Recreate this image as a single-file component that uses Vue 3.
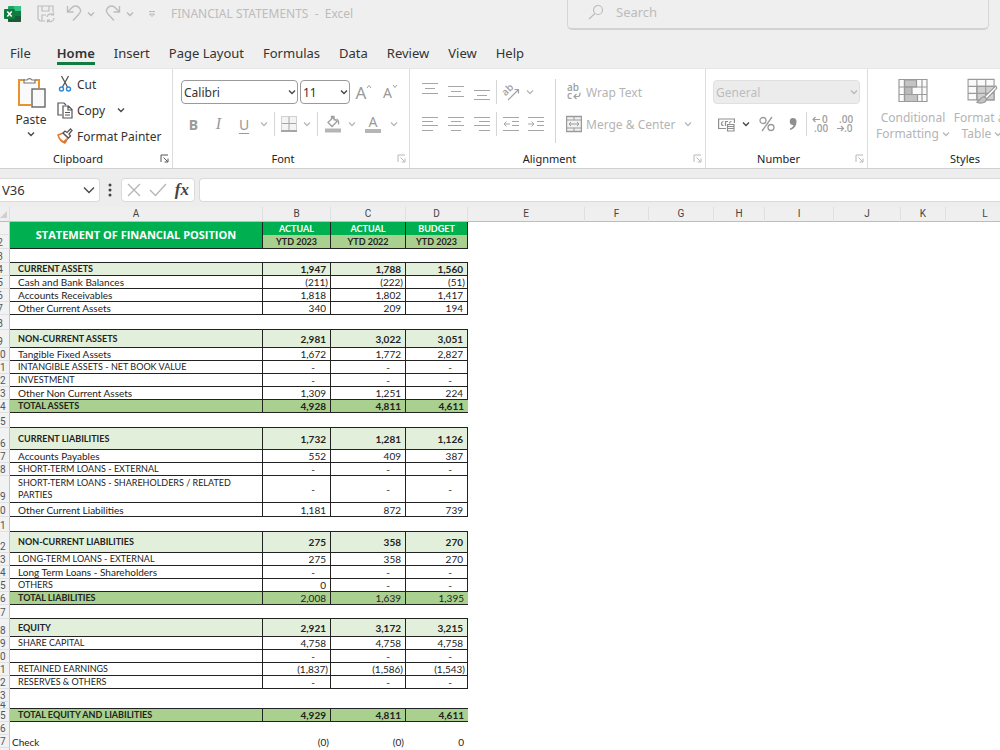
<script setup>
import { ref } from 'vue'

const tabs = ['File', 'Home', 'Insert', 'Page Layout', 'Formulas', 'Data', 'Review', 'View', 'Help']
const activeTab = ref('Home')
const fontName = ref('Calibri')
const fontSize = ref('11')
const cellRef = ref('V36')
const formula = ref('')
const search = ref('')

const columns = ['A', 'B', 'C', 'D', 'E', 'F', 'G', 'H', 'I', 'J', 'K', 'L']

// h = row height, type = row style
const rows = [
  { n: 3, h: 14, type: 'gap' },
  { n: 4, h: 13, type: 'section', label: 'CURRENT ASSETS', v: ['1,947', '1,788', '1,560'] },
  { n: 5, h: 13, type: 'line', label: 'Cash and Bank Balances', v: ['(211)', '(222)', '(51)'] },
  { n: 6, h: 13, type: 'line', label: 'Accounts Receivables', v: ['1,818', '1,802', '1,417'] },
  { n: 7, h: 13, type: 'line', label: 'Other Current Assets', v: ['340', '209', '194'] },
  { n: 8, h: 15, type: 'gap' },
  { n: 9, h: 18, type: 'section', label: 'NON-CURRENT ASSETS', v: ['2,981', '3,022', '3,051'] },
  { n: 10, h: 13, type: 'line', label: 'Tangible Fixed Assets', v: ['1,672', '1,772', '2,827'] },
  { n: 11, h: 13, type: 'line', label: 'INTANGIBLE ASSETS - NET BOOK VALUE', v: ['-', '-', '-'] },
  { n: 12, h: 13, type: 'line', label: 'INVESTMENT', v: ['-', '-', '-'] },
  { n: 13, h: 13, type: 'line', label: 'Other Non Current Assets', v: ['1,309', '1,251', '224'] },
  { n: 14, h: 13, type: 'total', label: 'TOTAL ASSETS', v: ['4,928', '4,811', '4,611'] },
  { n: 15, h: 15, type: 'gap' },
  { n: 16, h: 22, type: 'section', label: 'CURRENT LIABILITIES', v: ['1,732', '1,281', '1,126'] },
  { n: 17, h: 13, type: 'line', label: 'Accounts Payables', v: ['552', '409', '387'] },
  { n: 18, h: 13, type: 'line', label: 'SHORT-TERM LOANS - EXTERNAL', v: ['-', '-', '-'] },
  { n: 19, h: 27, type: 'line', label: 'SHORT-TERM LOANS - SHAREHOLDERS / RELATED PARTIES', v: ['-', '-', '-'] },
  { n: 20, h: 14, type: 'line', label: 'Other Current Liabilities', v: ['1,181', '872', '739'] },
  { n: 21, h: 15, type: 'gap' },
  { n: 22, h: 21, type: 'section', label: 'NON-CURRENT LIABILITIES', v: ['275', '358', '270'] },
  { n: 23, h: 13, type: 'line', label: 'LONG-TERM LOANS - EXTERNAL', v: ['275', '358', '270'] },
  { n: 24, h: 13, type: 'line', label: 'Long Term Loans - Shareholders', v: ['-', '-', '-'] },
  { n: 25, h: 13, type: 'line', label: 'OTHERS', v: ['0', '-', '-'] },
  { n: 26, h: 13, type: 'total light', label: 'TOTAL LIABILITIES', v: ['2,008', '1,639', '1,395'] },
  { n: 27, h: 14, type: 'gap' },
  { n: 28, h: 18, type: 'section', label: 'EQUITY', v: ['2,921', '3,172', '3,215'] },
  { n: 29, h: 13, type: 'line', label: 'SHARE CAPITAL', v: ['4,758', '4,758', '4,758'] },
  { n: 30, h: 13, type: 'line', label: '', v: ['-', '-', '-'] },
  { n: 31, h: 13, type: 'line', label: 'RETAINED EARNINGS', v: ['(1,837)', '(1,586)', '(1,543)'] },
  { n: 32, h: 13, type: 'line', label: 'RESERVES & OTHERS', v: ['-', '-', '-'] },
  { n: 33, h: 13, type: 'blank' },
  { n: 34, h: 7, type: 'gap' },
  { n: 35, h: 13, type: 'total', label: 'TOTAL EQUITY AND LIABILITIES', v: ['4,929', '4,811', '4,611'] },
  { n: 36, h: 13, type: 'blank' },
  { n: 37, h: 13, type: 'check', label: 'Check', v: ['(0)', '(0)', '0'] },
  { n: 38, h: 13, type: 'blank' }
]

function numClass(v) {
  if (v === '-') return 'dash'
  return v.startsWith('(') ? 'neg' : 'pos'
}

// upper-case labels are set one size smaller
function isCaps(label) {
  return label === label.toUpperCase()
}
</script>

<template>
  <div class="excel">
    <header class="titlebar">
      <svg class="logo" width="18" height="18" viewBox="0 0 18 18">
        <rect x="4" y="1" width="13" height="16" rx="1" fill="#21a366" />
        <path d="M10 1h6a1 1 0 0 1 1 1v4h-7z" fill="#33c481" />
        <path d="M4 9h13v7a1 1 0 0 1-1 1H5a1 1 0 0 1-1-1z" fill="#185c37" />
        <path d="M10 6h7v5h-7z" fill="#107c41" />
        <rect x="0" y="4" width="11" height="10" rx="1" fill="#107c41" />
        <path d="M3.300 6.500l4.400 5M7.700 6.500l-4.400 5" stroke="#fff" stroke-width="1.500" />
      </svg>
      <button class="quick save" aria-label="Save">
        <svg width="18" height="18" viewBox="0 0 18 18" fill="none" stroke="#bdbdbd" stroke-width="1.200">
          <path d="M8 16H3L1 14V1h15v6M5 1v5h7V1M5 16v-6h4" />
          <path d="M10 12a3.500 3.500 0 0 1 6-2M16.500 7.500V10H14M17 13a3.500 3.500 0 0 1-6 2.500M10.500 17.500V15H13" />
        </svg>
      </button>
      <button class="quick undo" aria-label="Undo">
        <svg width="16" height="18" viewBox="0 0 16 18" fill="none" stroke="#bdbdbd" stroke-width="1.400">
          <path d="M1.500 1v6h6M1.500 7l4-4a5 5 0 0 1 8 0c1.500 2 1 4.500-.5 6l-6 6.500" />
        </svg>
        <svg class="chev" viewBox="0 0 8 8"><path d="M1 2.500l3 3 3-3" /></svg>
      </button>
      <button class="quick redo" aria-label="Redo">
        <svg width="16" height="18" viewBox="0 0 16 18" fill="none" stroke="#bdbdbd" stroke-width="1.400">
          <path d="M14.500 1v6h-6M14.500 7l-4-4a5 5 0 0 0-8 0c-1.500 2-1 4.500.5 6l6 6.500" />
        </svg>
        <svg class="chev" viewBox="0 0 8 8"><path d="M1 2.500l3 3 3-3" /></svg>
      </button>
      <button class="quick" aria-label="Customize toolbar">
        <svg width="8" height="8" viewBox="0 0 8 8" fill="none" stroke="#b8b8b8"><path d="M1 1.500h6M1.500 4L4 6.500 6.500 4z" /></svg>
      </button>
      <span class="doc">FINANCIAL STATEMENTS &nbsp;-&nbsp; Excel</span>
      <label class="search">
        <svg width="16" height="16" viewBox="0 0 16 16" fill="none" stroke="#bdbdbd" stroke-width="1.200">
          <circle cx="10" cy="6" r="4.500" /><path d="M7 9.500L1 15" />
        </svg>
        <input v-model="search" type="text" placeholder="Search" aria-label="Search" />
      </label>
    </header>

    <nav class="tabs">
      <button v-for="t in tabs" :key="t" :class="{ active: t === activeTab }" @click="activeTab = t">{{ t }}</button>
    </nav>

    <section class="ribbon">
      <div class="group clipboard">
        <div class="body">
          <button class="paste">
            <svg width="30" height="34" viewBox="0 0 30 34" fill="none">
              <path d="M9 4H3v25h12M19 4h4v8" stroke="#e8932e" stroke-width="2" />
              <path d="M4 6v21h11V13h7V6z" fill="#fafafa" />
              <path d="M8 7V4h3a3 3 0 0 1 5 0h3v3z" fill="#fff" stroke="#777" stroke-width="1.200" />
              <rect x="16" y="13" width="13" height="18" fill="#fafafa" stroke="#666" stroke-width="1.400" />
            </svg>
            <span>Paste</span>
            <svg class="chev dark" viewBox="0 0 8 8"><path d="M1 2.500l3 3 3-3" /></svg>
          </button>
          <div class="clip-list">
            <button>
              <svg width="16" height="18" viewBox="0 0 16 18" fill="none">
                <path d="M4.500 1l6 11M11.500 1l-6 11" stroke="#555" stroke-width="1.300" />
                <circle cx="4.500" cy="14" r="2" stroke="#2b88d8" stroke-width="1.400" />
                <circle cx="11.500" cy="14" r="2" stroke="#2b88d8" stroke-width="1.400" />
              </svg>
              Cut
            </button>
            <button>
              <svg width="16" height="18" viewBox="0 0 16 18" fill="none" stroke="#555" stroke-width="1.200">
                <path d="M5 14H1V2h6l2 2" />
                <path d="M6 5h5.500L15 8.500V17H6zM11 5v4h4M8 11.500h5M8 14h5" />
              </svg>
              Copy
              <svg class="chev dark copy-chev" viewBox="0 0 8 8"><path d="M1 2.500l3 3 3-3" /></svg>
            </button>
            <button>
              <svg width="16" height="18" viewBox="0 0 16 18" fill="none">
                <path d="M1 8l5-2 5 5-3 5c-3-1-6-4-7-8z" fill="#fff" stroke="#e0762c" stroke-width="1.400" />
                <path d="M3 11l3.500 3L10 11l-1 4-1.500 1.500z" fill="#e0762c" />
                <path d="M6 6l2-2 2 1.500L13.500 2l1.500 1.500L12 7l1.500 2-2 2z" fill="#fff" stroke="#555" stroke-width="1.300" />
              </svg>
              Format Painter
            </button>
          </div>
        </div>
        <footer>
          <span>Clipboard</span>
          <button class="launch dark" aria-label="Clipboard options"><svg viewBox="0 0 9 9"><path d="M1 8V1h7M3.500 3.500l4 4M8 4.500V8H4.500" /></svg></button>
        </footer>
      </div>

      <div class="group font">
        <div class="body stack">
          <div class="line">
            <label class="select name">
              <select v-model="fontName" aria-label="Font"><option>Calibri</option><option>Arial</option></select>
              <svg class="chev dark" viewBox="0 0 8 8"><path d="M1 2.500l3 3 3-3" /></svg>
            </label>
            <label class="select size">
              <select v-model="fontSize" aria-label="Font size"><option>11</option><option>12</option></select>
              <svg class="chev dark" viewBox="0 0 8 8"><path d="M1 2.500l3 3 3-3" /></svg>
            </label>
            <button class="tool w28 grow-a">A<svg width="6" height="5" viewBox="0 0 6 5"><path d="M1 4l2-2.500L5 4" /></svg></button>
            <button class="tool w25 shrink-a">A<svg width="6" height="5" viewBox="0 0 6 5"><path d="M1 1l2 2.500L5 1" /></svg></button>
          </div>
          <div class="line">
            <button class="tool w25 bold">B</button>
            <button class="tool w25 italic">I</button>
            <button class="tool w26 under">U</button>
            <button class="tool w14" aria-label="Underline options"><svg class="chev" viewBox="0 0 8 8"><path d="M1 2.500l3 3 3-3" /></svg></button>
            <i class="sep"></i>
            <button class="tool w22" aria-label="Borders">
              <svg width="16" height="16" viewBox="0 0 16 16" fill="none" stroke="#a6a6a6">
                <path d="M.5.500h15v14H.5z" fill="#f4f4f4" stroke-dasharray="1 1" /><path d="M8 1v14M1 7.500h14" /><path d="M0 15h16" stroke-width="2" />
              </svg>
            </button>
            <button class="tool w14" aria-label="Border options"><svg class="chev" viewBox="0 0 8 8"><path d="M1 2.500l3 3 3-3" /></svg></button>
            <i class="sep"></i>
            <button class="tool w24" aria-label="Fill color">
              <svg width="16" height="18" viewBox="0 0 16 18" fill="none" stroke="#a0a0a0" stroke-width="1.300">
                <path d="M3 7.500L8 2.500l4 4-5 5zM6.500 4.500V1.500h2.500v4M11.500 4c2 1 2.500 2.500 2 5.500" /><path d="M0 15.500h16" stroke="#b5b5b5" stroke-width="4" />
              </svg>
            </button>
            <button class="tool w14" aria-label="Fill options"><svg class="chev" viewBox="0 0 8 8"><path d="M1 2.500l3 3 3-3" /></svg></button>
            <button class="tool w28 color-a">A</button>
            <button class="tool w14" aria-label="Font color options"><svg class="chev" viewBox="0 0 8 8"><path d="M1 2.500l3 3 3-3" /></svg></button>
          </div>
        </div>
        <footer>
          <span>Font</span>
          <button class="launch" aria-label="Font options"><svg viewBox="0 0 9 9"><path d="M1 8V1h7M3.500 3.500l4 4M8 4.500V8H4.500" /></svg></button>
        </footer>
      </div>

      <div class="group align">
        <div class="body">
          <div class="stack">
            <div class="line">
              <button class="tool w26" aria-label="Top align"><svg class="bars" viewBox="0 0 16 20"><path d="M0 1.500h16M3 6.500h10M0 11.500h16" /></svg></button>
              <button class="tool w26" aria-label="Middle align"><svg class="bars" viewBox="0 0 16 20"><path d="M0 4.500h16M3 9.500h10M0 14.500h16" /></svg></button>
              <button class="tool w26" aria-label="Bottom align"><svg class="bars" viewBox="0 0 16 20"><path d="M0 8.500h16M3 13.500h10M0 17.500h16" /></svg></button>
              <i class="sep"></i>
              <button class="tool w24" aria-label="Orientation">
                <svg width="18" height="18" viewBox="0 0 18 18" fill="none" stroke="#a0a0a0" stroke-width="1.200">
                  <text class="glyph" x="-7" y="12" transform="rotate(-45)">ab</text>
                  <path d="M6 17l10-10M12.500 6.500H16.500V10.500" />
                </svg>
              </button>
              <button class="tool w14" aria-label="Orientation options"><svg class="chev" viewBox="0 0 8 8"><path d="M1 2.500l3 3 3-3" /></svg></button>
            </div>
            <div class="line">
              <button class="tool w26" aria-label="Align left"><svg class="bars" viewBox="0 0 16 20"><path d="M0 3.500h16M0 7.500h11M0 11.500h16M0 16.500h11" /></svg></button>
              <button class="tool w26" aria-label="Center"><svg class="bars" viewBox="0 0 16 20"><path d="M0 3.500h16M3 7.500h10M0 11.500h16M3 16.500h10" /></svg></button>
              <button class="tool w26" aria-label="Align right"><svg class="bars" viewBox="0 0 16 20"><path d="M0 3.500h16M5 7.500h11M0 11.500h16M5 16.500h11" /></svg></button>
              <i class="sep"></i>
              <button class="tool w24" aria-label="Decrease indent"><svg class="bars" viewBox="0 0 16 20"><path d="M0 3.500h16M9 7.500h7M9 11.500h7M0 16.500h16M1 10h6M3.500 7.500L1 10l2.500 2.500" /></svg></button>
              <button class="tool w26" aria-label="Increase indent"><svg class="bars" viewBox="0 0 16 20"><path d="M0 3.500h16M9 7.500h7M9 11.500h7M0 16.500h16M0 10h6M3.500 7.500L6 10l-2.500 2.500" /></svg></button>
            </div>
          </div>
          <i class="tall"></i>
          <div class="stack wide">
            <button class="text-tool">
              <svg width="16" height="18" viewBox="0 0 16 18" fill="none" stroke="#a0a0a0" stroke-width="1.200">
                <text class="glyph" x="1" y="8">ab</text>
                <text class="glyph" x="1" y="16">c</text>
                <path d="M14 9.500v1.500c0 2-1 2.500-2.500 2.500H8M10.500 11L8 13.500l2.500 2.500" />
              </svg>
              Wrap Text
            </button>
            <button class="text-tool">
              <svg width="16" height="18" viewBox="0 0 16 18" fill="none" stroke="#9a9a9a">
                <path d="M.5 1.500h15v15H.5z" fill="#f2f2f2" stroke-width="1.400" /><path d="M8 1.500V5M8 13v3.500M.5 5h15M.5 13h15M3 9h10M5 7L3 9l2 2M11 7l2 2-2 2" />
              </svg>
              Merge &amp; Center
              <svg class="chev end" viewBox="0 0 8 8"><path d="M1 2.500l3 3 3-3" /></svg>
            </button>
          </div>
        </div>
        <footer>
          <span>Alignment</span>
          <button class="launch" aria-label="Alignment options"><svg viewBox="0 0 9 9"><path d="M1 8V1h7M3.500 3.500l4 4M8 4.500V8H4.500" /></svg></button>
        </footer>
      </div>

      <div class="group number">
        <div class="body stack">
          <label class="select format">
            <select disabled aria-label="Number format"><option>General</option></select>
            <svg class="chev" viewBox="0 0 8 8"><path d="M1 2.500l3 3 3-3" /></svg>
          </label>
          <div class="line">
            <button class="tool w26" aria-label="Accounting format">
              <svg width="17" height="16" viewBox="0 0 17 16" fill="none" stroke="#8f8f8f" stroke-width="1.200">
                <path d="M8 12.500H.6V3h15.800v4" /><path d="M5.500 5.500a2 2 0 1 0 0 4M7.500 10V5.500h2.500M13.500 5.500a2 2 0 0 0-2 2" />
                <path d="M9.500 8.500h6.500V15H9.500zM9.500 10.500h6.500M9.500 12.500h6.500" fill="#fff" />
              </svg>
            </button>
            <button class="tool w14" aria-label="Accounting options"><svg class="chev dark" viewBox="0 0 8 8"><path d="M1 2.500l3 3 3-3" /></svg></button>
            <button class="tool w28 percent" aria-label="Percent">
              <svg width="16" height="16" viewBox="0 0 16 16" fill="none" stroke="#9a9a9a" stroke-width="1.300"><circle cx="4" cy="4.500" r="3" /><circle cx="12" cy="11.500" r="3" /><path d="M13 1L3 15" /></svg>
            </button>
            <button class="tool w24" aria-label="Comma">
              <svg width="10" height="14" viewBox="0 0 10 14"><path d="M5 1a3.500 3.500 0 0 1 3.500 3.500C8.500 9 6 12 2 13v-1.500C4.500 10.500 5.500 9 5.500 8A3.500 3.500 0 1 1 5 1z" fill="#8f8f8f" /></svg>
            </button>
            <i class="sep"></i>
            <button class="tool w22" aria-label="Increase decimal">
              <svg width="16" height="18" viewBox="0 0 16 18" fill="none" stroke="#a0a0a0" stroke-width="1.200">
                <path d="M1 4.500h7M3.500 2L1 4.500 3.500 7" />
                <text class="glyph" x="10" y="8">0</text>
                <text class="glyph" x="2" y="17">.00</text>
              </svg>
            </button>
            <button class="tool w28" aria-label="Decrease decimal">
              <svg width="16" height="18" viewBox="0 0 16 18" fill="none" stroke="#a0a0a0" stroke-width="1.200">
                <path d="M0 13.500h6.500M4 11l2.500 2.500L4 16" />
                <text class="glyph" x="2" y="8">.00</text>
                <text class="glyph" x="7" y="17">.0</text>
              </svg>
            </button>
          </div>
        </div>
        <footer>
          <span>Number</span>
          <button class="launch" aria-label="Number options"><svg viewBox="0 0 9 9"><path d="M1 8V1h7M3.500 3.500l4 4M8 4.500V8H4.500" /></svg></button>
        </footer>
      </div>

      <div class="group styles">
        <div class="body">
          <button class="big">
            <svg width="30" height="26" viewBox="0 0 30 26" fill="none" stroke="#9a9a9a" stroke-width="1.200">
              <path d="M1 1.500h28v22H1z" fill="#fafafa" /><path d="M6.500 2h12v7h-12zM6.500 16.500h13v7h-13z" fill="#c4c4c4" /><path d="M6.500 9H14v7.500H6.500z" fill="#bbb" />
              <path d="M1 9h28M1 16.500h28M6.500 1.500v22M24 1.500v22" />
            </svg>
            <span>Conditional<br />Formatting <svg class="chev" viewBox="0 0 8 8"><path d="M1 2.500l3 3 3-3" /></svg></span>
          </button>
          <button class="big second">
            <svg width="32" height="28" viewBox="0 0 32 28" fill="none" stroke="#9a9a9a" stroke-width="1.200">
              <path d="M1 1.500h28v22H1z" fill="#fafafa" /><path d="M10.500 9H29v14.500H10.500z" fill="#cfcfcf" /><path d="M1 9h28M1 16.500h28M10.500 1.500v22M20 1.500v22" />
              <path d="M31 8.500L19 20l2 2.500L32 11z" fill="#fff" /><path d="M18.500 20c-4 0-4 4-8 6 4 2 10 1 10.500-3.500z" fill="#c4c4c4" />
            </svg>
            <span>Format as<br />Table <svg class="chev" viewBox="0 0 8 8"><path d="M1 2.500l3 3 3-3" /></svg></span>
          </button>
        </div>
        <footer><span>Styles</span></footer>
      </div>
    </section>

    <section class="formula-bar">
      <label class="namebox">
        <input v-model="cellRef" type="text" aria-label="Name box" />
        <svg width="12" height="8" viewBox="0 0 12 8" fill="none" stroke="#444" stroke-width="1.300"><path d="M1 1.500l5 5 5-5" /></svg>
      </label>
      <svg class="dots" width="4" height="14" viewBox="0 0 4 14" fill="#444"><circle cx="2" cy="2" r="1.500" /><circle cx="2" cy="7" r="1.500" /><circle cx="2" cy="12" r="1.500" /></svg>
      <div class="fx">
        <button aria-label="Cancel"><svg width="14" height="14" viewBox="0 0 14 14"><path d="M1 1l12 12M13 1L1 13" /></svg></button>
        <button aria-label="Enter"><svg width="18" height="14" viewBox="0 0 18 14"><path d="M1 7l5.500 5.500L17 1" /></svg></button>
        <button class="fn">fx</button>
      </div>
      <input v-model="formula" class="formula" type="text" aria-label="Formula" />
    </section>

    <main class="sheet">
      <table>
        <colgroup>
          <col class="c-num" /><col v-for="c in columns" :key="c" :class="'c-' + c" />
        </colgroup>
        <thead>
          <tr>
            <th class="corner"><svg width="7" height="7" viewBox="0 0 7 7"><path d="M7 0v7H0z" fill="#d0d0d0" /></svg></th>
            <th v-for="c in columns" :key="c" :class="'h-' + c">{{ c }}</th>
          </tr>
        </thead>
        <tbody>
          <tr class="head top">
            <th class="num"></th>
            <td class="title" rowspan="2">STATEMENT OF FINANCIAL POSITION</td>
            <td>ACTUAL</td>
            <td>ACTUAL</td>
            <td>BUDGET</td>
          </tr>
          <tr class="head period">
            <th class="num"><div>2</div></th>
            <td>YTD 2023</td>
            <td>YTD 2022</td>
            <td>YTD 2023</td>
          </tr>
          <tr v-for="r in rows" :key="r.n" :class="r.type" :style="{ height: r.h + 'px' }">
            <th class="num" :class="{ tiny: r.h < 10 }"><div>{{ r.n }}</div></th>
            <template v-if="r.v">
              <td class="label" :class="{ caps: isCaps(r.label) }">{{ r.label }}</td>
              <td v-for="(v, i) in r.v" :key="i" :class="numClass(v)">{{ v }}</td>
            </template>
            <td v-else class="empty" colspan="4"></td>
          </tr>
        </tbody>
      </table>
    </main>
  </div>
</template>

<style>
body {
  margin: 0;
  background: #fff;
}
</style>

<style scoped>
.excel {
  height: 100vh;
  display: flex;
  flex-direction: column;
  overflow: hidden;
  background: #fff;
  color: #333;
  font-family: "Noto Sans", "Open Sans", sans-serif;
  font-size: 12px;
}
button,
input,
select {
  font: inherit;
  color: inherit;
  border: 0;
  padding: 0;
  background: none;
  box-sizing: border-box;
}
svg {
  flex: none;
}
.chev {
  width: 8px;
  height: 8px;
  fill: none;
  stroke: #b8b8b8;
  stroke-width: 1.3;
}
.chev.dark {
  stroke: #444;
}
.glyph {
  fill: #a0a0a0;
  stroke: none;
  font-family: "Open Sans", sans-serif;
  font-size: 10px;
  font-weight: 600;
}

/* title bar */
.titlebar {
  display: flex;
  align-items: center;
  flex: none;
  height: 36px;
  padding: 0 11px 9px 4px;
  box-sizing: border-box;
  background: #efefef;
  color: #bcbcbc;
}
.logo {
  margin-right: 15px;
}
.quick {
  display: flex;
  align-items: center;
  gap: 5px;
}
.save {
  margin-right: 11px;
}
.undo {
  margin-right: 10px;
}
.redo {
  margin-right: 14px;
}
.doc {
  margin-left: 15px;
  white-space: nowrap;
}
.search {
  display: flex;
  align-items: center;
  gap: 12px;
  width: 422px;
  height: 30px;
  margin: 0 0 -3px auto;
  padding: 0 20px 4px;
  box-sizing: border-box;
  border: 1px solid #d6d6d6;
  border-top: 0;
  border-bottom: 2px solid #d2d2d2;
  border-radius: 0 0 5px 5px;
}
.search input {
  flex: 1;
  font-size: 13px;
  outline: 0;
}
.search input::placeholder {
  color: #bcbcbc;
  opacity: 1;
}

/* tabs */
.tabs {
  display: flex;
  flex: none;
  gap: 19px;
  height: 33px;
  padding: 8px 10px 3px;
  box-sizing: border-box;
  background: #efefef;
  border-bottom: 1px solid #e6e6e6;
}
.tabs button {
  font-size: 13px;
  line-height: 18px;
  border-bottom: 3px solid transparent;
}
.tabs button:first-child {
  margin-right: 7px;
}
.tabs .active {
  font-weight: 600;
  border-color: #107c41;
}

/* ribbon */
.ribbon {
  display: flex;
  flex: none;
  height: 100px;
  box-sizing: border-box;
  overflow: hidden;
  background: #fff;
  border-bottom: 1px solid #d0d0d0;
}
.group {
  flex: none;
  display: flex;
  flex-direction: column;
  box-sizing: border-box;
  border-right: 1px solid #dcdcdc;
}
.clipboard { width: 173px; }
.font { width: 237px; }
.align { width: 296px; }
.number { width: 162px; }
.styles { width: 202px; }
.body {
  display: flex;
  height: 80px;
  box-sizing: border-box;
}
.stack {
  display: flex;
  flex-direction: column;
  gap: 8px;
  padding-top: 11px;
}
.line {
  display: flex;
  align-items: center;
  height: 24px;
}
.group footer {
  display: flex;
  align-items: center;
  height: 19px;
  padding-right: 3px;
  font-size: 11px;
  color: #222;
}
.group footer span {
  flex: 1;
  padding-right: 4px;
  text-align: center;
}
.launch {
  width: 9px;
  height: 9px;
  display: flex;
}
.launch svg {
  fill: none;
  stroke: #b8b8b8;
}
.launch.dark svg {
  stroke: #555;
}
.paste {
  display: flex;
  flex-direction: column;
  align-items: center;
  width: 32px;
  margin-left: 15px;
  padding-top: 7px;
}
.paste span {
  line-height: 20px;
}
.clip-list {
  margin: 2px 0 0 10px;
}
.clip-list button {
  display: flex;
  align-items: center;
  gap: 4px;
  height: 26px;
  white-space: nowrap;
}
.copy-chev {
  margin-left: 8px;
}
.font .stack {
  padding-left: 8px;
}
.select {
  display: flex;
  position: relative;
  height: 24px;
}
.select select {
  width: 100%;
  height: 24px;
  appearance: none;
  padding: 0 2px;
  border: 1px solid #9a9a9a;
  border-radius: 4px;
  background: #fff;
}
.select .chev {
  position: absolute;
  right: 2px;
  top: 8px;
  pointer-events: none;
}
.name { width: 117px; margin-right: 2px; }
.size { width: 50px; }
.format { width: 147px; }
.format select {
  border-color: #e0e0e0;
  background: #ececec;
  color: #bcbcbc;
  opacity: 1;
}
.tool {
  display: flex;
  justify-content: center;
  align-items: center;
  height: 24px;
  color: #9a9a9a;
  font-size: 14px;
}
.w14 { width: 14px; }
.w22 { width: 22px; }
.w24 { width: 24px; }
.w25 { width: 25px; }
.w26 { width: 26px; }
.w28 { width: 28px; }
.sep {
  width: 1px;
  height: 24px;
  margin: 0 3px;
  background: #d5d5d5;
}
.align .sep,
.number .sep {
  margin: 0 2px 0 1px;
}
.grow-a {
  font-size: 17px;
}
.grow-a svg,
.shrink-a svg {
  align-self: flex-start;
  margin-top: 4px;
  fill: none;
  stroke: #a0a0a0;
}
.bold {
  font-weight: 700;
}
.italic {
  font-family: "Liberation Serif", serif;
  font-style: italic;
  font-size: 16px;
}
.under {
  text-decoration: underline;
  text-underline-offset: 3px;
}
.color-a {
  flex-direction: column;
  line-height: 14px;
}
.color-a::before {
  content: "";
  order: 2;
  width: 16px;
  height: 4px;
  background: #b5b5b5;
}
.bars {
  width: 16px;
  height: 20px;
  fill: none;
  stroke: #a6a6a6;
}
.align .body {
  padding-left: 7px;
}
.tall {
  width: 1px;
  height: 64px;
  margin: 10px 10px 0 0;
  background: #d5d5d5;
}
.align .stack:first-child {
  width: 138px;
}
.wide {
  flex: 1;
}
.text-tool {
  display: flex;
  align-items: center;
  gap: 4px;
  height: 24px;
  color: #b4b4b4;
  white-space: nowrap;
}
.end {
  margin: 0 13px 0 auto;
}
.number .stack {
  padding-left: 7px;
}
.styles .body {
  padding-left: 6px;
}
.big {
  flex: none;
  display: flex;
  flex-direction: column;
  align-items: center;
  gap: 6px;
  width: 78px;
  padding-top: 9px;
  color: #b4b4b4;
  line-height: 16px;
  white-space: nowrap;
}
.second {
  width: 60px;
}
.big > svg {
  height: 26px;
}

/* formula bar */
.formula-bar {
  display: flex;
  align-items: center;
  flex: none;
  height: 38px;
  padding-top: 3px;
  box-sizing: border-box;
  background: #ededed;
}
.namebox,
.fx,
.formula {
  height: 24px;
  box-sizing: border-box;
  border: 1px solid #dadada;
  border-radius: 4px;
  background: #fff;
}
.namebox {
  display: flex;
  align-items: center;
  width: 100px;
  padding-right: 4px;
  border-left: 0;
  border-radius: 0 4px 4px 0;
}
.namebox input {
  flex: 1;
  min-width: 0;
  padding-left: 2px;
  font-size: 13px;
}
.dots {
  margin: 0 9px 0 8px;
}
.fx {
  display: flex;
  align-items: center;
  justify-content: space-between;
  width: 74px;
  margin-right: 4px;
  padding: 0 5px;
}
.fx button {
  display: flex;
}
.fx svg {
  fill: none;
  stroke: #b5b5b5;
  stroke-width: 1.3;
}
.fx .fn {
  font: italic 700 17px/20px "Liberation Serif", serif;
  color: #444;
}
.formula {
  flex: 1;
  padding: 0 6px;
  border-right: 0;
  border-radius: 4px 0 0 4px;
}

/* sheet */
.sheet {
  flex: 1;
  min-height: 0;
  overflow: hidden;
}
table {
  width: 100%;
  table-layout: fixed;
  border-collapse: separate;
  border-spacing: 0;
  font-family: Lato, "Open Sans", sans-serif;
  font-size: 10px;
  line-height: 12px;
  color: #222;
}
.c-num { width: 10px; }
.c-A { width: 253px; }
.c-B { width: 68px; }
.c-C { width: 75px; }
.c-D { width: 62px; }
.c-E { width: 117px; }
.c-F { width: 64px; }
.c-G { width: 65px; }
.c-H { width: 51px; }
.c-I { width: 69px; }
.c-J { width: 67px; }
.c-K { width: 45px; }
th,
td {
  padding: 0;
  box-sizing: border-box;
}
thead th {
  height: 15px;
  background: #efefef;
  border-right: 1px solid #e0e0e0;
  border-bottom: 1px solid #bdbdbd;
  font-family: Roboto, sans-serif;
  font-weight: 400;
  color: #444;
}
thead .h-L {
  padding-left: 24px;
  border-right: 0;
}
.corner svg {
  display: block;
}
.num {
  background: #f2f2f2;
  border-right: 1px solid #c4c4c4;
  border-bottom: 1px solid #e0e0e0;
  font-family: Roboto, sans-serif;
  font-weight: 400;
  color: #555;
  vertical-align: bottom;
}
.num div {
  display: flex;
  justify-content: center;
  width: 0;
  height: 11px;
  line-height: 11px;
}
.num.tiny div {
  height: 6px;
  line-height: 6px;
  overflow-y: clip;
}
.head {
  height: 13px;
  font-size: 9px;
  font-weight: 700;
  text-align: center;
}
.head.period {
  height: 14px;
}
.head .num {
  font-size: 10px;
}
.head td {
  border-right: 1px solid #222;
}
.top td {
  background: #00b050;
  color: #fff;
}
.top .title {
  font-family: "Open Sans", sans-serif;
  font-size: 11px;
  border-bottom: 1px solid #222;
}
.period td {
  background: #a9d08e;
  color: #222;
  border-bottom: 1px solid #222;
}
.gap td {
  border-bottom: 1px solid #222;
}
.section td,
.sheet .line td,
.total td {
  border-right: 1px solid #222;
  border-bottom: 1px solid #222;
}
tr.line {
  display: table-row;
}
.section td {
  background: #e2efda;
  font-weight: 700;
}
.total td {
  background: #a9d08e;
  font-weight: 700;
}
.total.light td:not(.label) {
  font-weight: 400;
}
.total td:last-child {
  border-right: 0;
}
td.label {
  padding-left: 8px;
}
td.caps {
  font-size: 9px;
}
.check td.label {
  padding-left: 2px;
}
.pos,
.neg,
.dash {
  text-align: right;
}
.pos {
  padding-right: 4px;
}
.neg {
  padding-right: 2px;
}
.dash {
  padding-right: 15px;
}
</style>
